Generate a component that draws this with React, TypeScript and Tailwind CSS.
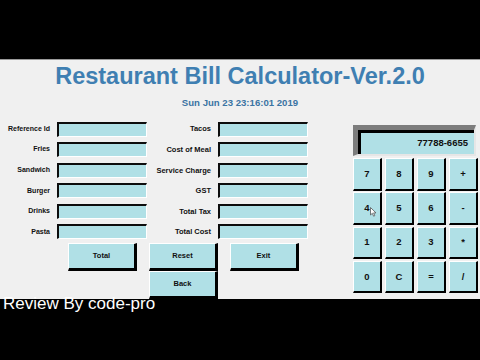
const leftFields = ["Reference Id", "Fries", "Sandwich", "Burger", "Drinks", "Pasta"];
const rightFields = ["Tacos", "Cost of Meal", "Service Charge", "GST", "Total Tax", "Total Cost"];

const keys = ["7", "8", "9", "+", "4", "5", "6", "-", "1", "2", "3", "*", "0", "C", "=", "/"];

const Entry = () => (
  <div className="h-[15px] border-t-2 border-l-2 border-b border-r border-t-[#0d0d0d] border-l-[#0d0d0d] border-b-white border-r-white bg-[#b0e0e6]" />
);

const RaisedButton = ({ label }: { label: string }) => (
  <div className="flex h-[28px] items-center justify-center border-t border-l border-b-[3px] border-r-[3px] border-t-white border-l-white border-b-black border-r-black bg-[#b0e0e6] text-[7.5px] font-bold text-[#111]">
    {label}
  </div>
);

export default function App() {
  return (
    <div
      className="relative h-[360px] w-[480px] overflow-hidden bg-black"
      style={{ fontFamily: '"Liberation Sans", Arial, sans-serif' }}
    >
      <div className="h-[59px] bg-black" />

      <div className="h-[240px] border-t border-[#9a9a9a] bg-[#f0f0f0]">
        {/* header */}
        <div className="h-[50px] pt-[5px] text-center">
          <h1 className="text-[23.5px] font-bold leading-none text-[#3f7fb2]">
            Restaurant Bill Calculator-Ver.2.0
          </h1>
          <p className="mt-[9.5px] text-[9.6px] font-bold leading-none text-[#3b74a3]">
            Sun Jun 23 23:16:01 2019
          </p>
        </div>

        <div className="flex">
          {/* form */}
          <div className="w-[353px] pt-[11.5px]">
            <div className="grid grid-cols-[57px_90px_71px_90px] gap-y-[5.6px]">
              {leftFields.map((label, i) => (
                <div key={label} className="contents">
                  <div className="flex items-center justify-end pr-[7px] text-[7px] font-bold text-[#111]">
                    {label}
                  </div>
                  <Entry />
                  <div className="flex items-center justify-end pr-[7px] text-[7.5px] font-bold text-[#111]">
                    {rightFields[i]}
                  </div>
                  <Entry />
                </div>
              ))}
            </div>

            <div className="ml-[68px] mt-[3.5px] grid grid-cols-[69px_69px_69px] gap-x-[12px]">
              <RaisedButton label="Total" />
              <RaisedButton label="Reset" />
              <RaisedButton label="Exit" />
              <div />
              <RaisedButton label="Back" />
            </div>
          </div>

          {/* calculator */}
          <div className="w-[127px] pt-[15px]">
            <div className="h-[31px] w-[123px] border-t-[5px] border-l-[5px] border-b-2 border-r-2 border-t-[#7d7d7d] border-l-[#7d7d7d] border-b-[#e6e6e6] border-r-[#e6e6e6]">
              <div className="flex h-full items-center justify-end border-t-[3px] border-l-[3px] border-t-black border-l-black bg-[#b0e0e6] pr-[6px] text-[9.5px] font-bold text-[#111]">
                77788-6655
              </div>
            </div>

            <div className="mt-[2px] grid grid-cols-[29px_29px_29px_29px] gap-x-[3px] gap-y-[1.8px]">
              {keys.map((k) => (
                <div
                  key={k}
                  className="flex h-[32.5px] items-center justify-center border-t border-l border-b-2 border-r-2 border-t-white border-l-white border-b-black border-r-black bg-[#b0e0e6] text-[9.5px] font-bold text-[#111]"
                >
                  {k}
                </div>
              ))}
            </div>
          </div>
        </div>
      </div>

      {/* mouse pointer over the "4" key */}
      <svg className="absolute left-[370px] top-[207px]" width="7" height="10" viewBox="0 0 7 10">
        <path d="M0.5 0.5 L0.5 8 L2.3 6.3 L3.6 9.2 L4.8 8.7 L3.6 5.9 L6 5.9 Z" fill="#fff" stroke="#555" strokeWidth="0.8" />
      </svg>

      {/* video watermark */}
      <div className="absolute left-[3px] top-[295px] text-[17px] leading-none text-white">
        Review By code-pro
      </div>
    </div>
  );
}
